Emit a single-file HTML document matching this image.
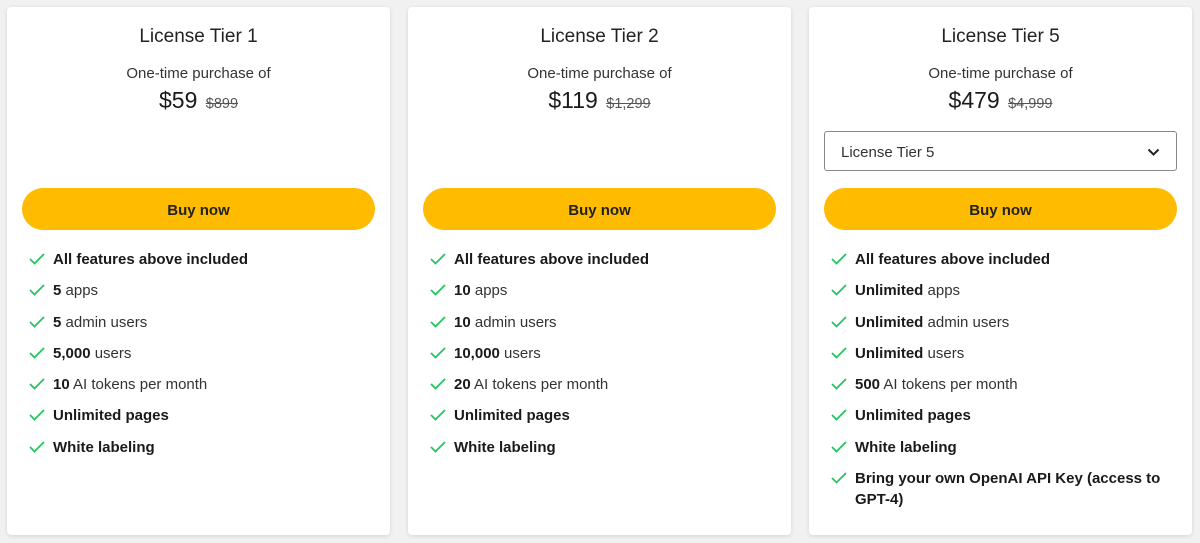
<!DOCTYPE html>
<html><head><style>
body{margin:0;width:1200px;height:543px;background:#f1f1f1;font-family:"Liberation Sans",sans-serif;color:#1c1c1c;position:relative;overflow:hidden}
.card{position:absolute;top:7px;width:383px;height:528px;background:#fff;border-radius:4px;box-shadow:0 1px 4px rgba(0,0,0,.12)}
.t{position:absolute;top:19px;width:100%;text-align:center;font-size:19px;color:#222}
.p1{position:absolute;top:58px;width:100%;text-align:center;font-size:15px;color:#333}
.pr{position:absolute;top:80px;width:100%;text-align:center;font-size:23px;color:#1a1a1a}
.pr s{font-size:14.5px;color:#555;margin-left:2px}
.btn{position:absolute;left:15px;right:15px;top:181px;height:42px;border-radius:21px;background:#FFBB00;text-align:center;line-height:45px;font-weight:bold;font-size:15px;color:#222}
.sel{position:absolute;left:15px;right:15px;top:124px;border:1px solid #888;border-radius:3px;font-size:15px;line-height:42px;padding-left:16px;box-sizing:border-box;height:40px;color:#333}
.sel svg{position:absolute;right:16px;top:16px}
ul{position:absolute;top:242px;left:22px;right:20px;margin:0;padding:0;list-style:none}
li{position:relative;padding-left:24px;font-size:15px;line-height:21px;margin-bottom:10.3px;color:#333}
li b{color:#1a1a1a}
li svg{position:absolute;left:0;top:4px}
</style></head><body>
<div class="card" style="left:7px">
<div class="t">License Tier 1</div><div class="p1">One-time purchase of</div>
<div class="pr">$59 <s>$899</s></div>
<div class="btn">Buy now</div>
<ul>
<li><svg width="16" height="12"><path d="M1 6l4.5 4.5L15 1" stroke="#22c55e" stroke-width="1.8" fill="none"/></svg><b>All features above included</b></li>
<li><svg width="16" height="12"><path d="M1 6l4.5 4.5L15 1" stroke="#22c55e" stroke-width="1.8" fill="none"/></svg><b>5</b> apps</li>
<li><svg width="16" height="12"><path d="M1 6l4.5 4.5L15 1" stroke="#22c55e" stroke-width="1.8" fill="none"/></svg><b>5</b> admin users</li>
<li><svg width="16" height="12"><path d="M1 6l4.5 4.5L15 1" stroke="#22c55e" stroke-width="1.8" fill="none"/></svg><b>5,000</b> users</li>
<li><svg width="16" height="12"><path d="M1 6l4.5 4.5L15 1" stroke="#22c55e" stroke-width="1.8" fill="none"/></svg><b>10</b> AI tokens per month</li>
<li><svg width="16" height="12"><path d="M1 6l4.5 4.5L15 1" stroke="#22c55e" stroke-width="1.8" fill="none"/></svg><b>Unlimited pages</b></li>
<li><svg width="16" height="12"><path d="M1 6l4.5 4.5L15 1" stroke="#22c55e" stroke-width="1.8" fill="none"/></svg><b>White labeling</b></li>
</ul></div>
<div class="card" style="left:408px">
<div class="t">License Tier 2</div><div class="p1">One-time purchase of</div>
<div class="pr">$119 <s>$1,299</s></div>
<div class="btn">Buy now</div>
<ul>
<li><svg width="16" height="12"><path d="M1 6l4.5 4.5L15 1" stroke="#22c55e" stroke-width="1.8" fill="none"/></svg><b>All features above included</b></li>
<li><svg width="16" height="12"><path d="M1 6l4.5 4.5L15 1" stroke="#22c55e" stroke-width="1.8" fill="none"/></svg><b>10</b> apps</li>
<li><svg width="16" height="12"><path d="M1 6l4.5 4.5L15 1" stroke="#22c55e" stroke-width="1.8" fill="none"/></svg><b>10</b> admin users</li>
<li><svg width="16" height="12"><path d="M1 6l4.5 4.5L15 1" stroke="#22c55e" stroke-width="1.8" fill="none"/></svg><b>10,000</b> users</li>
<li><svg width="16" height="12"><path d="M1 6l4.5 4.5L15 1" stroke="#22c55e" stroke-width="1.8" fill="none"/></svg><b>20</b> AI tokens per month</li>
<li><svg width="16" height="12"><path d="M1 6l4.5 4.5L15 1" stroke="#22c55e" stroke-width="1.8" fill="none"/></svg><b>Unlimited pages</b></li>
<li><svg width="16" height="12"><path d="M1 6l4.5 4.5L15 1" stroke="#22c55e" stroke-width="1.8" fill="none"/></svg><b>White labeling</b></li>
</ul></div>
<div class="card" style="left:809px">
<div class="t">License Tier 5</div><div class="p1">One-time purchase of</div>
<div class="pr">$479 <s>$4,999</s></div>
<div class="sel">License Tier 5<svg width="13" height="9"><path d="M1.5 1.5l5 5 5-5" stroke="#222" stroke-width="2" fill="none"/></svg></div>
<div class="btn">Buy now</div>
<ul>
<li><svg width="16" height="12"><path d="M1 6l4.5 4.5L15 1" stroke="#22c55e" stroke-width="1.8" fill="none"/></svg><b>All features above included</b></li>
<li><svg width="16" height="12"><path d="M1 6l4.5 4.5L15 1" stroke="#22c55e" stroke-width="1.8" fill="none"/></svg><b>Unlimited</b> apps</li>
<li><svg width="16" height="12"><path d="M1 6l4.5 4.5L15 1" stroke="#22c55e" stroke-width="1.8" fill="none"/></svg><b>Unlimited</b> admin users</li>
<li><svg width="16" height="12"><path d="M1 6l4.5 4.5L15 1" stroke="#22c55e" stroke-width="1.8" fill="none"/></svg><b>Unlimited</b> users</li>
<li><svg width="16" height="12"><path d="M1 6l4.5 4.5L15 1" stroke="#22c55e" stroke-width="1.8" fill="none"/></svg><b>500</b> AI tokens per month</li>
<li><svg width="16" height="12"><path d="M1 6l4.5 4.5L15 1" stroke="#22c55e" stroke-width="1.8" fill="none"/></svg><b>Unlimited pages</b></li>
<li><svg width="16" height="12"><path d="M1 6l4.5 4.5L15 1" stroke="#22c55e" stroke-width="1.8" fill="none"/></svg><b>White labeling</b></li>
<li><svg width="16" height="12"><path d="M1 6l4.5 4.5L15 1" stroke="#22c55e" stroke-width="1.8" fill="none"/></svg><b>Bring your own OpenAI API Key (access to GPT-4)</b></li>
</ul></div>
</body></html>
